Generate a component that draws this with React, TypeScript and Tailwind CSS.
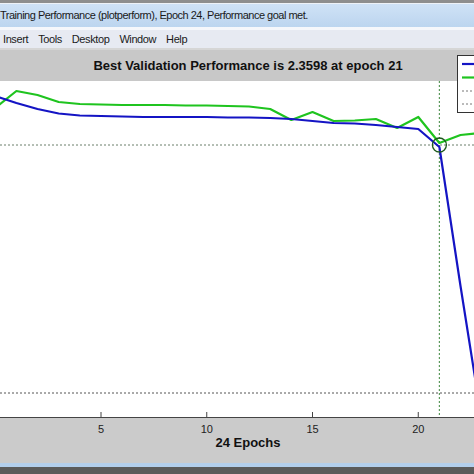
import React from 'react';

const ex = (i: number) => -4.75 + 21.15 * i;
const TOP = 81;

const blueY = [96, 103, 109, 113.5, 115.5, 116, 116.5, 117, 117, 117, 117, 117.5, 117.5, 118, 119, 121, 123, 123.5, 125, 127, 129, 147, 286, 420];
const greenY = [108, 91, 95, 102, 104, 104.5, 105, 105, 105, 105.5, 105.5, 106, 106.5, 109, 120, 112, 121, 120.5, 119, 128, 117, 143, 135, 133, 133];

const pts = (ys: number[]) => ys.map((y, i) => `${ex(i).toFixed(1)},${(y - TOP).toFixed(1)}`).join(' ');

const menus = ['Insert', 'Tools', 'Desktop', 'Window', 'Help'];
const ticks = [5, 10, 15, 20];

function Axes() {
  return (
    <div className="relative h-[337px] bg-white">
      <svg width="474" height="337" className="block">
        <line x1="0" y1={145 - TOP} x2="474" y2={145 - TOP} stroke="#6b7f6b" strokeWidth="1" strokeDasharray="2 2" />
        <line x1="0" y1={393 - TOP} x2="474" y2={393 - TOP} stroke="#555" strokeWidth="1" strokeDasharray="2 2" />
        <line x1={ex(21)} y1="0" x2={ex(21)} y2="337" stroke="#5c9a5c" strokeWidth="1.2" strokeDasharray="2 2" />
        <polyline points={pts(greenY)} fill="none" stroke="#1fc41f" strokeWidth="2.2" strokeLinejoin="round" />
        <polyline points={pts(blueY)} fill="none" stroke="#1414c4" strokeWidth="2.2" strokeLinejoin="round" />
        <circle cx={ex(21)} cy={145 - TOP} r="7" fill="none" stroke="#1d5a1d" strokeWidth="1.3" />
        {ticks.map((t) => (
          <line key={t} x1={ex(t)} y1="331" x2={ex(t)} y2="337" stroke="#444" strokeWidth="1" />
        ))}
        <line x1="0" y1="336.5" x2="474" y2="336.5" stroke="#444" strokeWidth="1.2" />
      </svg>
      <div className="absolute left-[457px] top-[-26px] h-[58px] w-[30px] border border-[#333] bg-white">
        <svg width="30" height="58" className="block">
          <line x1="4" y1="8" x2="17" y2="8" stroke="#1414c4" strokeWidth="2.2" />
          <line x1="4" y1="21.5" x2="17" y2="21.5" stroke="#1fc41f" strokeWidth="2.2" />
          <line x1="4" y1="35" x2="17" y2="35" stroke="#777" strokeWidth="1" strokeDasharray="2 2" />
          <line x1="4" y1="48" x2="17" y2="48" stroke="#777" strokeWidth="1" strokeDasharray="2 2" />
        </svg>
      </div>
    </div>
  );
}

export default function App() {
  return (
    <div className="flex h-[474px] w-[474px] flex-col overflow-hidden bg-[#cbcbcb] font-['Liberation_Sans',Arial,sans-serif]">
      <div className="h-[3px] bg-[#8e8e8e]" />
      <div className="h-[1px] bg-[#eef2f7]" />
      <div className="flex h-[23px] items-center bg-gradient-to-b from-[#cfe2f6] to-[#bcd5ef] text-[11px] tracking-[-0.5px] text-[#1a1a1a]">
        <span>Training Performance (plotperform), Epoch 24, Performance goal met.</span>
      </div>
      <div className="h-[3px] bg-[#f5f7fb]" />
      <div className="flex h-[18px] items-center gap-[10px] bg-[#e7eaf2] pl-[3px] text-[11px] tracking-[-0.4px] text-[#1a1a1a]">
        {menus.map((m) => (
          <span key={m}>{m}</span>
        ))}
      </div>
      <div className="h-[2px] bg-[#d6d6d6]" />
      <div className="flex h-[413px] flex-col">
        <div className="flex h-[31px] items-center justify-center bg-[#c8c8c8] pl-[22px] text-[13px] font-bold text-[#111]">
          Best Validation Performance is 2.3598 at epoch 21
        </div>
        <Axes />
        <div className="relative h-[45px]">
          {ticks.map((t) => (
            <span
              key={t}
              className="absolute top-[3px] w-[30px] text-center text-[11px] text-[#222]"
              style={{ left: ex(t) - 15 }}
            >
              {t}
            </span>
          ))}
          <div className="pl-[22px] pt-[15px] text-center text-[13px] font-bold text-[#111]">24 Epochs</div>
        </div>
      </div>
      <div className="h-[4px] bg-[#b3cfec]" />
      <div className="flex-1 bg-[#5b5b5b]" />
    </div>
  );
}
